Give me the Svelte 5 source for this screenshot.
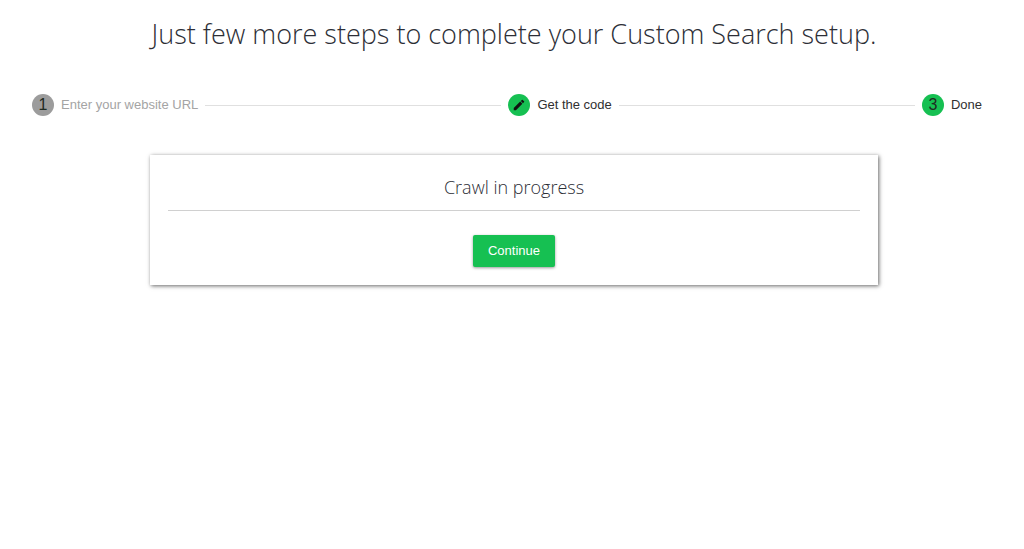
<script>
  const steps = [
    { mark: '1', label: 'Enter your website URL', state: 'idle' },
    { mark: 'edit', label: 'Get the code', state: 'active' },
    { mark: '3', label: 'Done', state: 'active' }
  ];
</script>

<main>
  <h1>Just few more steps to complete your Custom Search setup.</h1>

  <ol class="stepper">
    {#each steps as step, i}
      {#if i > 0}<li class="line" aria-hidden="true"></li>{/if}
      <li class="step {step.state}">
        <span class="dot">
          {#if step.mark === 'edit'}
            <svg viewBox="0 0 24 24" width="14" height="14" aria-hidden="true">
              <path d="M3 17.25V21h3.75L17.81 9.94l-3.75-3.75L3 17.25zM20.71 7.04a1 1 0 0 0 0-1.41l-2.34-2.34a1 1 0 0 0-1.41 0l-1.83 1.83 3.75 3.75 1.83-1.83z" />
            </svg>
          {:else}{step.mark}{/if}
        </span>
        <span>{step.label}</span>
      </li>
    {/each}
  </ol>

  <section class="card">
    <h2>Crawl in progress</h2>
    <button type="button">Continue</button>
  </section>
</main>

<style>
  :global(body) { margin: 0; background: #fff; }
  main {
    padding: 14px 28px 14px 32px;
    font-family: "Liberation Sans", Arial, sans-serif;
    font-size: 13px;
    color: #303030;
  }
  h1, h2 {
    margin: 0;
    font-family: "Open Sans", sans-serif;
    font-weight: 300;
    text-align: center;
    color: #2c2e36;
  }
  h1 { font-size: 27px; line-height: 40px; }
  .stepper {
    display: flex;
    align-items: center;
    gap: 7px;
    margin: 39px 14px 0 0;
    padding: 0;
    list-style: none;
  }
  .step {
    display: flex;
    align-items: center;
    gap: 7px;
    line-height: 24px;
    white-space: nowrap;
  }
  .idle { color: #a4a4a4; }
  .line { flex: 1; height: 1px; background: #e0e0e0; }
  .dot {
    display: flex;
    align-items: center;
    justify-content: center;
    width: 22px;
    height: 22px;
    border-radius: 50%;
    background: #16c052;
    color: #1f2a22;
    font-size: 16px;
    line-height: 22px;
  }
  .dot svg { fill: #111; }
  .idle .dot { background: #9c9c9c; }
  .card {
    display: flex;
    flex-direction: column;
    align-items: center;
    width: 75.5%;
    box-sizing: border-box;
    margin: 38px auto 0;
    padding: 18px;
    box-shadow: 1px 1px 4px rgba(0, 0, 0, 0.6);
  }
  h2 {
    align-self: stretch;
    padding-bottom: 9px;
    border-bottom: 1px solid #d0d0d0;
    font-size: 18px;
    line-height: 28px;
  }
  button {
    margin-top: 24px;
    padding: 0 15px;
    border: 0;
    border-radius: 2px;
    background: #16c052;
    color: #fff;
    font: 13px/32px "Liberation Sans", Arial, sans-serif;
    box-shadow: 0 1px 3px rgba(0, 0, 0, 0.4);
    cursor: pointer;
  }
</style>
